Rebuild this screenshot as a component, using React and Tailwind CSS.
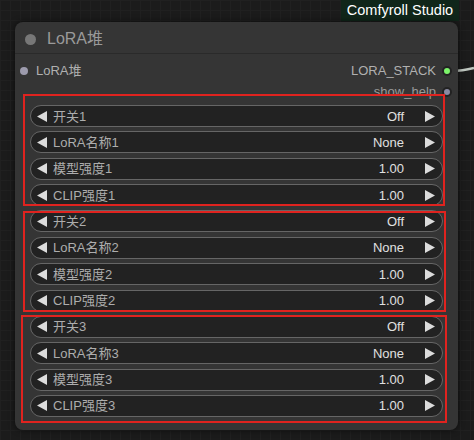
import React from "react";

const groups = [1, 2, 3].map((n) => [
  { label: `开关${n}`, value: "Off" },
  { label: `LoRA名称${n}`, value: "None" },
  { label: `模型强度${n}`, value: "1.00" },
  { label: `CLIP强度${n}`, value: "1.00" },
]);

function Arrow({ dir }) {
  return (
    <svg width="10" height="11" viewBox="0 0 10 11" className="shrink-0">
      {dir === "left" ? (
        <polygon points="10,0 10,11 0,5.5" fill="#dcdcdc" />
      ) : (
        <polygon points="0,0 0,11 10,5.5" fill="#dcdcdc" />
      )}
    </svg>
  );
}

function Widget({ label, value }) {
  return (
    <div className="flex items-center h-[22px] rounded-full border border-[#666666] bg-[#222222] pl-[6px] pr-[7px] text-[13px] leading-none">
      <Arrow dir="left" />
      <span className="ml-[6px] text-[#adadad]">{label}</span>
      <span className="ml-auto text-[#e0e0e0]">{value}</span>
      <span className="ml-[21px]">
        <Arrow dir="right" />
      </span>
    </div>
  );
}

export default function App() {
  const font = { fontFamily: '"Liberation Sans", Arial, "Noto Sans CJK SC", sans-serif' };
  return (
    <div
      className="relative w-[474px] h-[440px] overflow-hidden bg-[#1b1b1b] bg-[linear-gradient(#202020_1px,transparent_1px),linear-gradient(90deg,#202020_1px,transparent_1px)] bg-[size:10px_10px]"
      style={font}
    >
      {/* group badge */}
      <div className="absolute left-[341px] top-0 w-[118px] h-[21px] bg-[#10261a] flex items-center justify-center text-[14.5px] text-white">
        Comfyroll Studio
      </div>

      {/* link wire */}
      <svg className="absolute left-[452px] top-[60px]" width="22" height="20">
        <path d="M0 11 C8 11 14 10 22 8" stroke="#bfc7c0" strokeWidth="2.5" fill="none" />
      </svg>

      <div className="absolute left-[15px] top-[22px] w-[443px] h-[408px] rounded-[8px] bg-[#353535] shadow-[0_0_6px_rgba(0,0,0,0.6)]">
        <div className="flex items-center h-[32px] border-b border-[#2a2a2a] pl-[10px] pt-[3px]">
          <span className="w-[11px] h-[11px] rounded-full bg-[#777777]" />
          <span className="ml-[11px] text-[16px] text-[#9a9a9a]">LoRA堆</span>
        </div>

        <div className="pt-[6px]">
          <div className="flex items-center h-[21px] text-[13px] pl-[5px] pr-[6px]">
            <span className="w-[8px] h-[8px] rounded-full bg-[#9d9bad]" />
            <span className="ml-[8px] text-[#b0b0b0]">LoRA堆</span>
            <span className="ml-auto text-[#b0b0b0]">LORA_STACK</span>
            <span className="ml-[6px] w-[10px] h-[10px] rounded-full bg-[#7cf46a] border-2 border-[#222]" />
          </div>
          <div className="flex items-center h-[21px] text-[13px] pr-[6px]">
            <span className="ml-auto text-[#9a9a9a]">show_help</span>
            <span className="ml-[6px] w-[10px] h-[10px] rounded-full bg-[#8a8aa2] border-2 border-[#222]" />
          </div>
        </div>

        <div className="mt-[3px] px-[15px] flex flex-col gap-[4.36px]">
          {groups.flat().map((w) => (
            <Widget key={w.label} label={w.label} value={w.value} />
          ))}
        </div>
      </div>

      {/* annotation boxes */}
      <div className="absolute left-[23px] top-[94px] w-[422px] h-[112px] border-2 border-[#e0231f]" />
      <div className="absolute left-[23px] top-[211px] w-[423px] h-[101px] border-2 border-[#e0231f]" />
      <div className="absolute left-[21px] top-[315px] w-[426px] h-[108px] border-2 border-[#e0231f]" />
    </div>
  );
}
